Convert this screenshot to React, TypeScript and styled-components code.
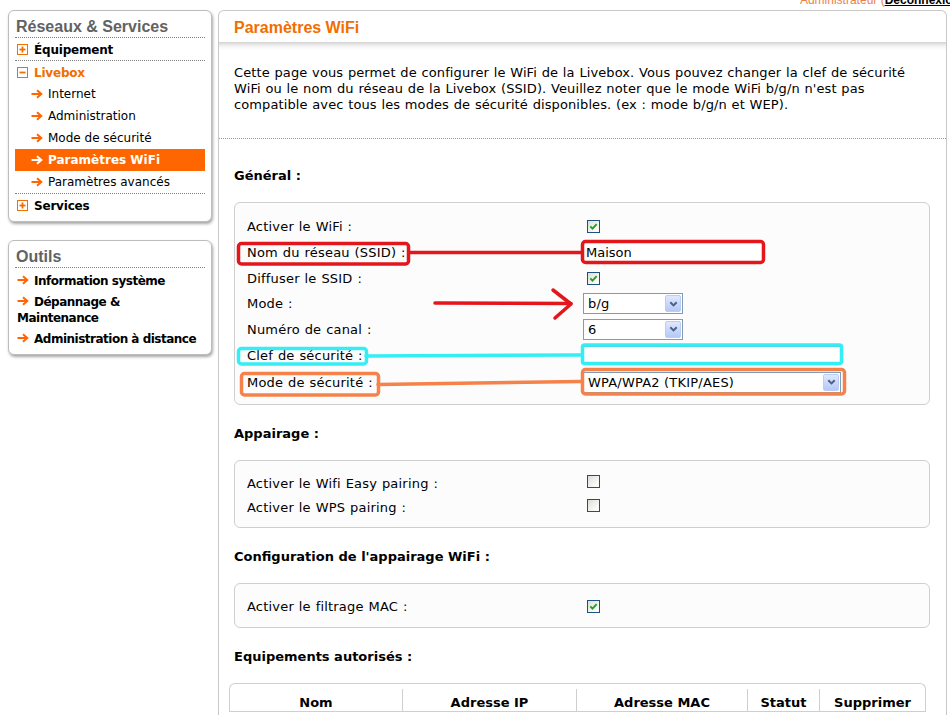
import React from "react";
import styled, { createGlobalStyle } from "styled-components";

const ORANGE = "#f16e00";
const BRIGHT = "#ff6600";

const GlobalStyle = createGlobalStyle`
  html, body { margin: 0; padding: 0; background: #fff; overflow: hidden; }
  body {
    font-family: "DejaVu Sans", Verdana, sans-serif;
    font-size: 13px;
    color: #000;
  }
  #root { width: 950px; }
`;

const Page = styled.div`
  width: 950px;
`;

const TopBar = styled.header`
  height: 10px;
  display: flex;
  justify-content: flex-end;
  align-items: flex-start;
  margin-right: -14px;
  font-family: "Liberation Sans", Arial, sans-serif;
  font-size: 12px;
  line-height: 14px;
  white-space: nowrap;
`;

const UserInfo = styled.div`
  margin-top: -7px;
  color: #ee7f4a;
`;

const Logout = styled.a`
  color: #000;
  font-weight: bold;
  text-decoration: underline;
`;

const Layout = styled.div`
  display: flex;
  align-items: flex-start;
  gap: 6px;
  padding-left: 8px;
`;

const Sidebar = styled.aside`
  width: 204px;
  display: flex;
  flex-direction: column;
  gap: 18px;
`;

const SidePanel = styled.nav<{ $pb: number }>`
  box-sizing: border-box;
  background: #fff;
  border: 1px solid #bdbdbd;
  border-radius: 6px;
  box-shadow: 1px 2px 3px rgba(0, 0, 0, 0.35);
  padding: 0 6px ${(p) => p.$pb}px;
`;

const SideTitle = styled.div`
  font-family: "Liberation Sans", Arial, sans-serif;
  font-weight: bold;
  font-size: 16px;
  line-height: 20px;
  color: #626262;
  padding: 6px 1px 0;
  border-bottom: 1px dotted #808080;
`;

const Group = styled.div<{ $last?: boolean }>`
  border-bottom: ${(p) => (p.$last ? "none" : "1px dotted #808080")};
`;

const GroupHead = styled.div<{ $open?: boolean }>`
  height: 22px;
  display: flex;
  align-items: center;
  gap: 6px;
  padding-left: 2px;
  padding-top: 1px;
  box-sizing: border-box;
  font-weight: bold;
  font-size: 12px;
  line-height: 22px;
  letter-spacing: -0.2px;
  color: ${(p) => (p.$open ? ORANGE : "#000")};
`;

const SubItem = styled.div<{ $active?: boolean }>`
  height: 22px;
  display: flex;
  align-items: center;
  gap: 5px;
  padding-left: 16px;
  font-size: 12px;
  line-height: 22px;
  font-weight: ${(p) => (p.$active ? "bold" : "normal")};
  color: ${(p) => (p.$active ? "#fff" : "#000")};
  background: ${(p) => (p.$active ? BRIGHT : "transparent")};
`;

const ArrowWrap = styled.span<{ $light?: boolean }>`
  display: inline-flex;
  width: 12px;
  height: 10px;
  color: ${(p) => (p.$light ? "#fff" : BRIGHT)};
`;

const ToolList = styled.div`
  display: flex;
  flex-direction: column;
  gap: 5px;
  padding: 5px 2px 0;
`;

const ToolItem = styled.a`
  display: block;
  font-weight: bold;
  font-size: 12px;
  line-height: 16px;
  letter-spacing: -0.5px;
  color: #000;
  text-decoration: none;
`;

const ToolArrow = styled(ArrowWrap)`
  margin-right: 5px;
`;

const Main = styled.main`
  width: 729px;
  box-sizing: border-box;
  border: 1px solid #c9c9c9;
  border-bottom: none;
  border-radius: 6px 6px 0 0;
  background: #fff;
`;

const MainTitle = styled.h1`
  margin: 0;
  padding: 7px 15px 4px;
  font-family: "Liberation Sans", Arial, sans-serif;
  font-weight: bold;
  font-size: 16px;
  line-height: 20px;
  color: ${ORANGE};
`;

const Content = styled.div`
  background: linear-gradient(to bottom, #d2d2d2 0px, #ececec 3px, #fafafa 6px, #fff 9px) no-repeat;
  padding-bottom: 40px;
`;

const Intro = styled.p`
  margin: 0;
  padding: 23px 15px 25px;
  line-height: 16px;
  font-size: 13px;
  letter-spacing: 0.1px;
  word-spacing: 0.5px;
  border-bottom: 1px dotted #999;
`;

const Form = styled.div`
  display: flex;
  flex-direction: column;
  padding: 0 16px 0 15px;
`;

const Heading = styled.h2<{ $first?: boolean }>`
  margin: ${(p) => (p.$first ? 29 : 21)}px 0 18px;
  font-size: 13px;
  line-height: 16px;
  font-weight: bold;
`;

const Box = styled.div<{ $pb: number }>`
  position: relative;
  border: 1px solid #cfcfcf;
  border-radius: 6px;
  background: #fcfcfc;
  padding: 10px 12px ${(p) => p.$pb}px;
`;

const Row = styled.div<{ $h: number }>`
  display: grid;
  grid-template-columns: 336px 1fr;
  align-items: center;
  height: ${(p) => p.$h}px;
`;

const Label = styled.span`
  font-size: 13px;
  letter-spacing: 0.2px;
  word-spacing: 0.5px;
`;

const CheckBox = styled.span`
  display: inline-flex;
  align-items: center;
  justify-content: center;
  width: 13px;
  height: 13px;
  box-sizing: border-box;
  margin-left: 4px;
  border: 1px solid #1c5180;
  background: linear-gradient(135deg, #dcdcd7 0%, #f4f4f1 60%, #fff 100%);
`;

const TextField = styled.div<{ $w: number; $h: number }>`
  width: ${(p) => p.$w}px;
  height: ${(p) => p.$h}px;
  box-sizing: border-box;
  border: 1px solid #7f9db9;
  background: #fff;
  padding-left: 2px;
  display: flex;
  align-items: center;
  font-size: 13px;
`;

const SelectBox = styled.div<{ $w: number }>`
  width: ${(p) => p.$w}px;
  height: 21px;
  box-sizing: border-box;
  border: 1px solid #7f9db9;
  background: #fff;
  display: flex;
  align-items: center;
  justify-content: space-between;
  padding: 0 1px 0 4px;
  font-size: 13px;
  letter-spacing: 0.2px;
`;

const SelectBtn = styled.span`
  width: 16px;
  height: 17px;
  box-sizing: border-box;
  border: 1px solid #bccdf5;
  border-radius: 2px;
  background: linear-gradient(to bottom, #dfe8fe, #b5c9f7);
  display: flex;
  align-items: center;
  justify-content: center;
`;

const Overlay = styled.svg`
  position: absolute;
  left: 0;
  top: 0;
  width: 100%;
  height: 100%;
  overflow: visible;
  pointer-events: none;
`;

const TableBox = styled.div`
  margin-left: -5px;
  width: 697px;
  box-sizing: border-box;
  border: 1px solid #cfcfcf;
  border-bottom: none;
  border-radius: 6px 6px 0 0;
  padding-top: 5px;
  background: #fff;
`;

const TableHead = styled.div`
  display: grid;
  grid-template-columns: 173px 174px 171px 72px 1fr;
`;

const HeadCell = styled.div<{ $last?: boolean }>`
  height: 23px;
  box-sizing: border-box;
  padding-top: 5px;
  line-height: 17px;
  text-align: center;
  font-weight: bold;
  font-size: 13px;
  border-bottom: 1px solid #cfcfcf;
  border-right: ${(p) => (p.$last ? "none" : "1px solid #cfcfcf")};
`;

const ArrowIcon = () => (
  <svg width="12" height="10" viewBox="0 0 12 10">
    <path d="M0.5 5 H9.5" stroke="currentColor" strokeWidth="2" fill="none" />
    <path d="M6 1.2 L10.3 5 L6 8.8" stroke="currentColor" strokeWidth="2" fill="none" />
  </svg>
);

const Arrow = ({ light }: { light?: boolean }) => (
  <ArrowWrap $light={light}>
    <ArrowIcon />
  </ArrowWrap>
);

const PlusMinus = ({ minus }: { minus?: boolean }) => (
  <svg width="11" height="11" viewBox="0 0 11 11" style={{ flex: "none" }}>
    <rect x="0.5" y="0.5" width="10" height="10" fill="#fff" stroke={ORANGE} strokeWidth="1" />
    <path d="M2.5 5.5 H8.5" stroke={ORANGE} strokeWidth="1.8" />
    {!minus && <path d="M5.5 2.5 V8.5" stroke={ORANGE} strokeWidth="1.8" />}
  </svg>
);

const Check = ({ checked }: { checked?: boolean }) => (
  <CheckBox>
    {checked && (
      <svg width="9" height="9" viewBox="0 0 9 9">
        <path d="M1.3 4.4 L3.5 6.6 L7.7 2.2" stroke="#21a121" strokeWidth="1.9" fill="none" />
      </svg>
    )}
  </CheckBox>
);

const Select = ({ w, value }: { w: number; value: string }) => (
  <SelectBox $w={w}>
    <span>{value}</span>
    <SelectBtn>
      <svg width="9" height="6" viewBox="0 0 9 6">
        <path d="M1.3 1.2 L4.5 4.4 L7.7 1.2" stroke="#4d6185" strokeWidth="2" fill="none" />
      </svg>
    </SelectBtn>
  </SelectBox>
);

const RED = "#e3161b";
const CYAN = "#33eef5";
const CORAL = "#f5824a";

const Annotations = () => (
  <Overlay>
    <g fill="none" strokeWidth="3.5" strokeLinejoin="round" strokeLinecap="round">
      <rect x="3.5" y="40.5" width="170" height="20.5" rx="3" stroke={RED} />
      <path d="M174 49.5 L347 49.5" stroke={RED} />
      <rect x="347.5" y="38.5" width="181" height="21" rx="3" stroke={RED} />
      <path d="M200 100 L336 100.5" stroke={RED} />
      <path d="M318 87 L336 101 L320 115" stroke={RED} />
      <rect x="3.5" y="145.5" width="128" height="15.5" rx="3" stroke={CYAN} />
      <path d="M131 153 L347 152" stroke={CYAN} />
      <rect x="347.5" y="142" width="259" height="18.5" rx="2" stroke={CYAN} />
      <rect x="6.5" y="170.5" width="137" height="21.5" rx="3" stroke={CORAL} />
      <path d="M143 181.5 L346 178.5" stroke={CORAL} />
      <rect x="347.5" y="166.5" width="262" height="24.5" rx="3" stroke={CORAL} />
    </g>
  </Overlay>
);

export default function App() {
  return (
    <Page>
      <GlobalStyle />
      <TopBar>
        <UserInfo>
          Administrateur (<Logout>Déconnexion</Logout>)
        </UserInfo>
      </TopBar>
      <Layout>
        <Sidebar>
          <SidePanel $pb={5}>
            <SideTitle>Réseaux &amp; Services</SideTitle>
            <Group>
              <GroupHead>
                <PlusMinus />
                Équipement
              </GroupHead>
            </Group>
            <Group>
              <GroupHead $open>
                <PlusMinus minus />
                Livebox
              </GroupHead>
              <SubItem>
                <Arrow />
                Internet
              </SubItem>
              <SubItem>
                <Arrow />
                Administration
              </SubItem>
              <SubItem>
                <Arrow />
                Mode de sécurité
              </SubItem>
              <SubItem $active>
                <Arrow light />
                Paramètres WiFi
              </SubItem>
              <SubItem>
                <Arrow />
                Paramètres avancés
              </SubItem>
            </Group>
            <Group $last>
              <GroupHead>
                <PlusMinus />
                Services
              </GroupHead>
            </Group>
          </SidePanel>
          <SidePanel $pb={7}>
            <SideTitle>Outils</SideTitle>
            <ToolList>
              <ToolItem>
                <ToolArrow>
                  <ArrowIcon />
                </ToolArrow>
                Information système
              </ToolItem>
              <ToolItem>
                <ToolArrow>
                  <ArrowIcon />
                </ToolArrow>
                Dépannage &amp;
                <br />
                Maintenance
              </ToolItem>
              <ToolItem>
                <ToolArrow>
                  <ArrowIcon />
                </ToolArrow>
                Administration à distance
              </ToolItem>
            </ToolList>
          </SidePanel>
        </Sidebar>

        <Main>
          <MainTitle>Paramètres WiFi</MainTitle>
          <Content>
            <Intro>
              Cette page vous permet de configurer le WiFi de la Livebox. Vous pouvez changer la clef de sécurité
              <br />
              WiFi ou le nom du réseau de la Livebox (SSID). Veuillez noter que le mode WiFi b/g/n n'est pas
              <br />
              compatible avec tous les modes de sécurité disponibles. (ex : mode b/g/n et WEP).
            </Intro>
            <Form>
              <Heading $first>Général :</Heading>
              <Box $pb={9}>
                <Row $h={26}>
                  <Label>Activer le WiFi :</Label>
                  <span>
                    <Check checked />
                  </span>
                </Row>
                <Row $h={26}>
                  <Label>Nom du réseau (SSID) :</Label>
                  <TextField $w={181} $h={21}>Maison</TextField>
                </Row>
                <Row $h={26}>
                  <Label>Diffuser le SSID :</Label>
                  <span>
                    <Check checked />
                  </span>
                </Row>
                <Row $h={25}>
                  <Label>Mode :</Label>
                  <Select w={100} value="b/g" />
                </Row>
                <Row $h={26}>
                  <Label>Numéro de canal :</Label>
                  <Select w={100} value="6" />
                </Row>
                <Row $h={27}>
                  <Label>Clef de sécurité :</Label>
                  <TextField $w={258} $h={19} />
                </Row>
                <Row $h={26}>
                  <Label>Mode de sécurité :</Label>
                  <Select w={258} value="WPA/WPA2 (TKIP/AES)" />
                </Row>
                <Annotations />
              </Box>

              <Heading>Appairage :</Heading>
              <Box $pb={8}>
                <Row $h={24}>
                  <Label>Activer le Wifi Easy pairing :</Label>
                  <span>
                    <Check />
                  </span>
                </Row>
                <Row $h={24}>
                  <Label>Activer le WPS pairing :</Label>
                  <span>
                    <Check />
                  </span>
                </Row>
              </Box>

              <Heading>Configuration de l'appairage WiFi :</Heading>
              <Box $pb={9}>
                <Row $h={24}>
                  <Label>Activer le filtrage MAC :</Label>
                  <span>
                    <Check checked />
                  </span>
                </Row>
              </Box>

              <Heading>Equipements autorisés :</Heading>
              <TableBox>
                <TableHead>
                  <HeadCell>Nom</HeadCell>
                  <HeadCell>Adresse IP</HeadCell>
                  <HeadCell>Adresse MAC</HeadCell>
                  <HeadCell>Statut</HeadCell>
                  <HeadCell $last>Supprimer</HeadCell>
                </TableHead>
              </TableBox>
            </Form>
          </Content>
        </Main>
      </Layout>
    </Page>
  );
}
